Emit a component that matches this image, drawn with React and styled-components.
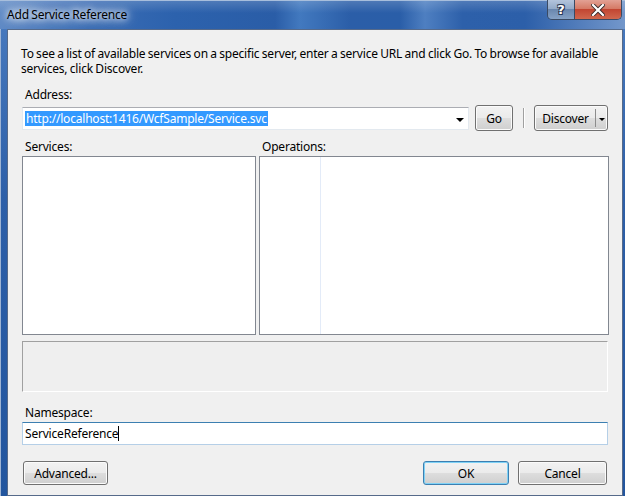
import styled, { createGlobalStyle } from "styled-components";

const GlobalStyle = createGlobalStyle`
    html, body {
        margin: 0;
        padding: 0;
        overflow: hidden;
        background: #ffffff;
    }
    * {
        box-sizing: border-box;
    }
`;

const App = () => {
    return (
        <>
            <GlobalStyle />
            <Frame>
                <TitleBar>
                    <Title>Add Service Reference</Title>
                    <CaptionButtons>
                        <HelpButton>?</HelpButton>
                        <CloseButton>
                            <svg width="14" height="12" viewBox="0 0 14 12">
                                <path d="M2 1 L12 11 M12 1 L2 11" stroke="#3b2a2a" strokeWidth="4" strokeLinecap="square" />
                                <path d="M2 1 L12 11 M12 1 L2 11" stroke="#ffffff" strokeWidth="2.2" strokeLinecap="square" />
                            </svg>
                        </CloseButton>
                    </CaptionButtons>
                </TitleBar>
                <Body>
                    <Intro>
                        <Line>To see a list of available services on a specific server, enter a service URL and click Go. To browse for available</Line>
                        <Line>services, click Discover.</Line>
                    </Intro>
                    <Label $top={11}>Address:</Label>
                    <AddressRow>
                        <ComboBox>
                            <Selected>http://localhost:1416/WcfSample/Service.svc</Selected>
                            <DropArrow />
                        </ComboBox>
                        <Button $width={38} $height={26}>Go</Button>
                        <Separator />
                        <SplitButton>
                            <SplitMain>Discover</SplitMain>
                            <SplitArrow>
                                <DropArrow $small />
                            </SplitArrow>
                        </SplitButton>
                    </AddressRow>
                    <Panes>
                        <Pane $fixed>
                            <Label $top={0}>Services:</Label>
                            <ListBox />
                        </Pane>
                        <Pane>
                            <Label $top={0}>Operations:</Label>
                            <ListBox>
                                <ColumnLine />
                            </ListBox>
                        </Pane>
                    </Panes>
                    <StatusPanel />
                    <Label $top={13}>Namespace:</Label>
                    <TextBox>
                        ServiceReference
                        <Caret />
                    </TextBox>
                    <Footer>
                        <Button $width={85} $height={24}>Advanced...</Button>
                        <FooterRight>
                            <Button $width={86} $height={24} $default>OK</Button>
                            <Button $width={89} $height={24}>Cancel</Button>
                        </FooterRight>
                    </Footer>
                </Body>
            </Frame>
        </>
    );
};

const Frame = styled.div`
    width: 625px;
    height: 496px;
    overflow: hidden;
    display: flex;
    flex-direction: column;
    padding: 0 2px 0 7px;
    background: linear-gradient(180deg, #4a7cc0 0%, #2d5fa8 40%, #22559e 100%);
    box-shadow: inset 1px 0 0 #9db3d3, inset 0 1px 0 #9db3d3;
    font-family: "Noto Sans", "Open Sans", sans-serif;
    font-size: 12px;
    letter-spacing: -0.2px;
    word-spacing: -0.5px;
    color: #000000;
`;

const TitleBar = styled.div`
    height: 29px;
    flex: none;
    display: flex;
    align-items: flex-start;
    justify-content: space-between;
    margin: 0 -2px 0 -7px;
    padding: 0 3px 0 7px;
    background:
        linear-gradient(180deg, rgba(255, 255, 255, 0.18) 0%, rgba(255, 255, 255, 0) 45%),
        linear-gradient(90deg, #5f8ac5 0%, #3b6db5 14%, #2c62ad 28%, #2a5da7 44%, #4279bf 48%, #2b5ea8 56%, #2a5ea8 64%, #4e7fc1 68%, #2d60aa 74%, #2c5fa9 84%, #7397cb 100%);
    box-shadow: inset 0 1px 0 #a7bedc;
`;

const Title = styled.div`
    margin-top: 7px;
    line-height: 16px;
    font-size: 12px;
    color: #000000;
    text-shadow: 0 0 6px #ffffff, 0 0 10px #ffffff, 0 0 14px rgba(255, 255, 255, 0.9);
`;

const CaptionButtons = styled.div`
    display: flex;
    height: 20px;
    border: 1px solid #3a4a63;
    border-top: none;
    border-radius: 0 0 5px 5px;
    overflow: hidden;
`;

const HelpButton = styled.div`
    width: 27px;
    display: flex;
    align-items: center;
    justify-content: center;
    font-family: "DejaVu Sans", sans-serif;
    font-weight: bold;
    font-size: 13px;
    color: #ffffff;
    text-shadow: 1px 1px 0 #2a3550, -1px -1px 0 #2a3550, 1px -1px 0 #2a3550, -1px 1px 0 #2a3550;
    background: linear-gradient(180deg, #b3c4dc 0%, #94abc9 45%, #6a87ae 50%, #86a2c6 100%);
    border-right: 1px solid #3a4a63;
`;

const CloseButton = styled.div`
    width: 46px;
    display: flex;
    align-items: center;
    justify-content: center;
    background: linear-gradient(180deg, #e2a194 0%, #d57a66 45%, #c24632 50%, #d0674e 100%);
`;

const Body = styled.div`
    flex: 1;
    display: flex;
    flex-direction: column;
    background: #f0f0f0;
    border: 1px solid #566a8a;
    padding: 16px 14px 0 14px;
`;

const Intro = styled.div`
    display: flex;
    flex-direction: column;
    margin-left: -1px;
`;

const Line = styled.div`
    height: 15px;
    line-height: 15px;
    white-space: nowrap;
`;

const Label = styled.div`
    margin-top: ${(p) => p.$top}px;
    padding-left: 3px;
    line-height: 15px;
`;

const AddressRow = styled.div`
    display: flex;
    align-items: flex-start;
    margin-top: 3px;
    height: 26px;
`;

const ComboBox = styled.div`
    width: 447px;
    height: 23px;
    margin-top: 2px;
    margin-right: 6px;
    display: flex;
    align-items: center;
    justify-content: space-between;
    padding: 0 4px 0 2px;
    background: #ffffff;
    border: 1px solid #e3e9ef;
    border-top-color: #abadb3;
`;

const Selected = styled.span`
    background: #3399ff;
    color: #ffffff;
    line-height: 15px;
    padding: 0 1px;
`;

const DropArrow = styled.span`
    width: 0;
    height: 0;
    border-left: ${(p) => (p.$small ? 3 : 4)}px solid transparent;
    border-right: ${(p) => (p.$small ? 3 : 4)}px solid transparent;
    border-top: ${(p) => (p.$small ? 3 : 4)}px solid #000000;
    margin-top: 2px;
`;

const Button = styled.div`
    width: ${(p) => p.$width}px;
    height: ${(p) => p.$height}px;
    flex: none;
    display: flex;
    align-items: center;
    justify-content: center;
    border: 1px solid ${(p) => (p.$default ? "#3c7fb1" : "#707070")};
    border-radius: 3px;
    background: linear-gradient(180deg, #f2f2f2 0%, #ebebeb 48%, #dddddd 52%, #cfcfcf 100%);
    box-shadow: inset 0 0 0 1px ${(p) => (p.$default ? "#7fd2f6" : "#fbfbfb")};
    line-height: 15px;
`;

const Separator = styled.div`
    width: 2px;
    height: 20px;
    margin: 3px 9px 0 10px;
    border-left: 1px solid #a0a0a0;
    border-right: 1px solid #ffffff;
`;

const SplitButton = styled.div`
    width: 74px;
    height: 26px;
    display: flex;
    border: 1px solid #707070;
    border-radius: 3px;
    overflow: hidden;
    background: linear-gradient(180deg, #f2f2f2 0%, #ebebeb 48%, #dddddd 52%, #cfcfcf 100%);
    box-shadow: inset 0 0 0 1px #fbfbfb;
`;

const SplitMain = styled.div`
    flex: 1;
    display: flex;
    align-items: center;
    justify-content: center;
    padding-left: 1px;
`;

const SplitArrow = styled.div`
    width: 12px;
    display: flex;
    align-items: center;
    justify-content: center;
    border-left: 1px solid #8c8c8c;
    margin: 3px 0;
`;

const Panes = styled.div`
    display: flex;
    gap: 3px;
    margin-top: 8px;
`;

const Pane = styled.div`
    display: flex;
    flex-direction: column;
    flex: ${(p) => (p.$fixed ? "0 0 234px" : "1 1 0")};
    margin-right: ${(p) => (p.$fixed ? 0 : -1)}px;
`;

const ListBox = styled.div`
    position: relative;
    height: 179px;
    margin-top: 2px;
    background: #ffffff;
    border: 1px solid #828790;
`;

const ColumnLine = styled.div`
    position: absolute;
    left: 60px;
    top: 0;
    bottom: 0;
    width: 1px;
    background: #e3ebf8;
`;

const StatusPanel = styled.div`
    height: 51px;
    margin-top: 6px;
    border: 1px solid #ffffff;
    border-top-color: #a0a0a0;
    border-left-color: #a0a0a0;
    background: #efefef;
`;

const TextBox = styled.div`
    height: 23px;
    margin-top: 2px;
    display: flex;
    align-items: center;
    padding-left: 2px;
    background: #ffffff;
    border: 1px solid #b5cfe7;
    border-top-color: #3c7fb1;
`;

const Caret = styled.span`
    width: 1px;
    height: 15px;
    background: #000000;
`;

const Footer = styled.div`
    display: flex;
    justify-content: space-between;
    margin-top: 16px;
    padding: 0 1px;
`;

const FooterRight = styled.div`
    display: flex;
    gap: 9px;
`;

export default App;
